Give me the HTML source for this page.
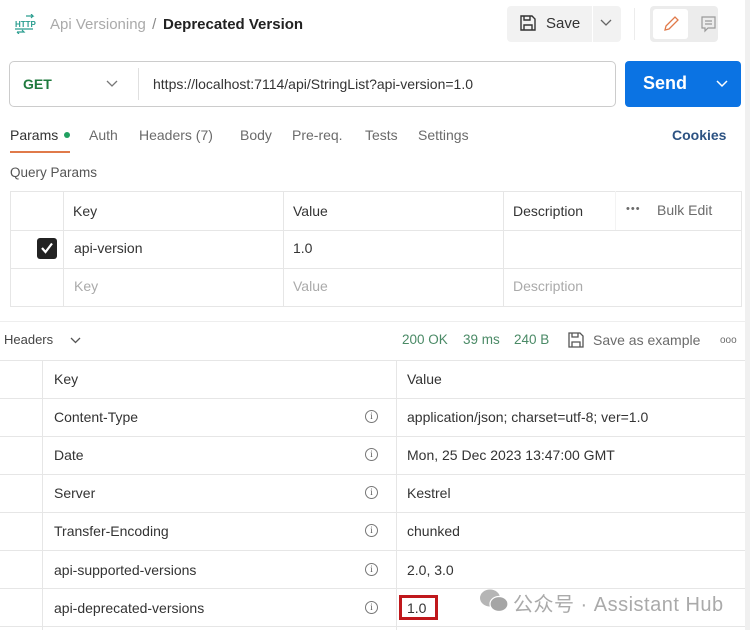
<!DOCTYPE html>
<html><head><meta charset="utf-8"><style>
*{margin:0;padding:0;box-sizing:border-box}
body{width:750px;height:630px;background:#fff;font-family:"Liberation Sans","Noto Sans CJK SC",sans-serif;color:#212121;position:relative;overflow:hidden;font-size:14px}
.a{position:absolute;white-space:nowrap}
.g{color:#6b6b6b}
.l{color:#aaa}
.hl{position:absolute;height:1px;background:#e6e6e6}
.vl{position:absolute;width:1px;background:#e6e6e6}
.info{position:absolute;width:13px;height:13px;border:1px solid #777;border-radius:50%;font-size:9px;line-height:11px;text-align:center;color:#555;font-family:"Liberation Serif",serif}
</style></head><body>
<div class="a" style="left:745px;top:0;width:5px;height:630px;background:#f0f0f0"></div>
<svg class="a" style="left:14px;top:14px" width="22" height="20" viewBox="0 0 22 20"><path d="M12 2h7l-2-2M19 2l-2 2" stroke="#2a9d8f" fill="none" stroke-width="1.2"/><text x="1" y="13" font-size="8" font-family="Liberation Sans" fill="#2a9d8f" font-weight="bold">HTTP</text><path d="M1 15h18M3 18h7l-2 -2M3 18l2 2" stroke="#2a9d8f" fill="none" stroke-width="1.2"/></svg>
<div class="a l" style="left:50px;top:16px;font-size:15px">Api Versioning <span style="color:#888;margin-left:2px">/</span></div>
<div class="a" style="left:163px;top:16px;font-size:15px;font-weight:bold;color:#222">Deprecated Version</div>
<div class="a" style="left:507px;top:6px;width:114px;height:36px;background:#f2f2f2;border-radius:4px"></div>
<div class="a" style="left:592px;top:6px;width:1px;height:36px;background:#fff"></div>
<svg class="a" style="left:519px;top:14px" width="18" height="18" viewBox="0 0 18 18"><path d="M2 2h11l3 3v11H2z M5 16v-5h8v5 M5 2v4h6V2" stroke="#333" fill="none" stroke-width="1.4"/></svg>
<div class="a" style="left:546px;top:15px;font-size:15px;color:#333">Save</div>
<svg class="a" style="left:600px;top:19px" width="12" height="8"><path d="M1 1l5 5 5-5" stroke="#666" fill="none" stroke-width="1.3"/></svg>
<div class="a" style="left:634px;top:8px;width:1px;height:32px;background:#ececec"></div>
<div class="a" style="left:650px;top:6px;width:68px;height:36px;background:#ececec;border-radius:4px"></div>
<div class="a" style="left:653px;top:9px;width:35px;height:30px;background:#fff;border-radius:3px"></div>
<svg class="a" style="left:662px;top:15px" width="18" height="18"><path d="M3 15l1-4 9-9 3 3-9 9z" stroke="#e07a4a" fill="none" stroke-width="1.3"/></svg>
<svg class="a" style="left:700px;top:15px" width="18" height="18"><path d="M2 2h13v11H8l-3 3v-3H2z M5 6h7M5 9h7" stroke="#999" fill="none" stroke-width="1.2"/></svg>
<div class="a" style="left:9px;top:61px;width:607px;height:46px;border:1px solid #ccc;border-radius:5px"></div>
<div class="a" style="left:23px;top:76px;font-size:14px;color:#1f7a3e;font-weight:bold">GET</div>
<svg class="a" style="left:106px;top:80px" width="12" height="8"><path d="M1 1l5 5 5-5" stroke="#777" fill="none" stroke-width="1.3"/></svg>
<div class="a" style="left:138px;top:68px;width:1px;height:32px;background:#e0e0e0"></div>
<div class="a" style="left:153px;top:76px;font-size:14px;color:#333">https://localhost:7114/api/StringList?api-version=1.0</div>
<div class="a" style="left:625px;top:61px;width:116px;height:46px;background:#0b73e3;border-radius:4px"></div>
<div class="a" style="left:643px;top:73px;font-size:18px;font-weight:bold;color:#fff">Send</div>
<svg class="a" style="left:716px;top:80px" width="12" height="8"><path d="M1 1l5 5 5-5" stroke="#fff" fill="none" stroke-width="1.5"/></svg>
<div class="a" style="left:10px;top:127px;color:#333">Params</div>
<div class="a" style="left:64px;top:132px;width:6px;height:6px;border-radius:50%;background:#20a060"></div>
<div class="a" style="left:10px;top:151px;width:60px;height:2px;background:#e07a4a"></div>
<div class="a g" style="left:89px;top:127px">Auth</div>
<div class="a g" style="left:139px;top:127px">Headers (7)</div>
<div class="a g" style="left:240px;top:127px">Body</div>
<div class="a g" style="left:292px;top:127px">Pre-req.</div>
<div class="a g" style="left:365px;top:127px">Tests</div>
<div class="a g" style="left:418px;top:127px">Settings</div>
<div class="a" style="left:672px;top:127px;font-weight:bold;color:#2c5282">Cookies</div>
<div class="a" style="left:10px;top:165px;color:#555;font-size:13.5px">Query Params</div>
<div class="a" style="left:10px;top:191px;width:732px;height:116px;border:1px solid #e6e6e6"></div>
<div class="hl" style="left:10px;top:230px;width:732px"></div>
<div class="hl" style="left:10px;top:268px;width:732px"></div>
<div class="vl" style="left:63px;top:191px;height:116px"></div>
<div class="vl" style="left:283px;top:191px;height:116px"></div>
<div class="vl" style="left:503px;top:191px;height:116px"></div>
<div class="vl" style="left:615px;top:191px;height:39px;background:#f3f3f3"></div>
<div class="a" style="left:73px;top:203px;color:#333">Key</div>
<div class="a" style="left:293px;top:203px;color:#333">Value</div>
<div class="a" style="left:513px;top:203px;color:#333">Description</div>
<div class="a g" style="left:626px;top:203px;font-size:11px;letter-spacing:1px">•••</div>
<div class="a g" style="left:657px;top:202px">Bulk Edit</div>
<div class="a" style="left:37px;top:238px;width:20px;height:21px;background:#222;border-radius:3px"></div>
<svg class="a" style="left:40px;top:241px" width="14" height="14"><path d="M2 7l3.5 4L12 2.5" stroke="#fff" fill="none" stroke-width="2.2"/></svg>
<div class="a" style="left:74px;top:240px;color:#333">api-version</div>
<div class="a" style="left:293px;top:240px;color:#333">1.0</div>
<div class="a l" style="left:74px;top:278px">Key</div>
<div class="a l" style="left:293px;top:278px">Value</div>
<div class="a l" style="left:513px;top:278px">Description</div>
<div class="hl" style="left:0;top:321px;width:745px;background:#eee"></div>
<div class="a" style="left:4px;top:332px;font-size:13px;color:#444">Headers</div>
<svg class="a" style="left:70px;top:337px" width="11" height="7"><path d="M1 1l4.5 4.5L10 1" stroke="#555" fill="none" stroke-width="1.3"/></svg>
<div class="a" style="left:402px;top:332px;color:#4a8a66;font-size:13.5px">200 OK</div>
<div class="a" style="left:463px;top:332px;color:#4a8a66;font-size:13.5px">39 ms</div>
<div class="a" style="left:514px;top:332px;color:#4a8a66;font-size:13.5px">240 B</div>
<svg class="a" style="left:567px;top:331px" width="18" height="18"><path d="M2 2h11l3 3v11H2z M5 16v-5h8v5 M5 2v4h6V2" stroke="#555" fill="none" stroke-width="1.3"/></svg>
<div class="a g" style="left:593px;top:332px">Save as example</div>
<div class="a g" style="left:720px;top:335px;font-size:10px">ooo</div>
<div class="hl" style="left:0;top:360px;width:745px"></div>
<div class="vl" style="left:42px;top:360px;height:270px"></div>
<div class="vl" style="left:396px;top:360px;height:270px"></div>
<div class="a" style="left:54px;top:371px;color:#333">Key</div>
<div class="a" style="left:407px;top:371px;color:#333">Value</div>
<div class="hl" style="left:0;top:398px;width:745px"></div>
<div class="hl" style="left:0;top:436px;width:745px"></div>
<div class="hl" style="left:0;top:474px;width:745px"></div>
<div class="hl" style="left:0;top:512px;width:745px"></div>
<div class="hl" style="left:0;top:550px;width:745px"></div>
<div class="hl" style="left:0;top:588px;width:745px"></div>
<div class="hl" style="left:0;top:626px;width:745px"></div>
<div class="a" style="left:54px;top:409px;color:#333">Content-Type</div>
<div class="a" style="left:54px;top:447px;color:#333">Date</div>
<div class="a" style="left:54px;top:485px;color:#333">Server</div>
<div class="a" style="left:54px;top:523px;color:#333">Transfer-Encoding</div>
<div class="a" style="left:54px;top:562px;color:#333">api-supported-versions</div>
<div class="a" style="left:54px;top:600px;color:#333">api-deprecated-versions</div>
<div class="info" style="left:365px;top:410px">i</div>
<div class="info" style="left:365px;top:448px">i</div>
<div class="info" style="left:365px;top:486px">i</div>
<div class="info" style="left:365px;top:524px">i</div>
<div class="info" style="left:365px;top:563px">i</div>
<div class="info" style="left:365px;top:601px">i</div>
<div class="a" style="left:407px;top:409px;color:#333">application/json; charset=utf-8; ver=1.0</div>
<div class="a" style="left:407px;top:447px;color:#333">Mon, 25 Dec 2023 13:47:00 GMT</div>
<div class="a" style="left:407px;top:485px;color:#333">Kestrel</div>
<div class="a" style="left:407px;top:523px;color:#333">chunked</div>
<div class="a" style="left:407px;top:562px;color:#333">2.0, 3.0</div>
<div class="a" style="left:399px;top:595px;width:39px;height:25px;border:3px solid #c0181c"></div>
<div class="a" style="left:407px;top:600px;color:#333">1.0</div>
<svg class="a" style="left:479px;top:588px" width="30" height="26"><ellipse cx="11" cy="10" rx="10" ry="8.5" fill="#b5b5b5"/><ellipse cx="20" cy="16" rx="9" ry="7.5" fill="#a5a5a5" stroke="#fff" stroke-width="1.2"/></svg>
<div class="a" style="left:513px;top:588px;font-size:20px;color:#aaa;letter-spacing:0.5px">公众号 · Assistant Hub</div>
</body></html>
